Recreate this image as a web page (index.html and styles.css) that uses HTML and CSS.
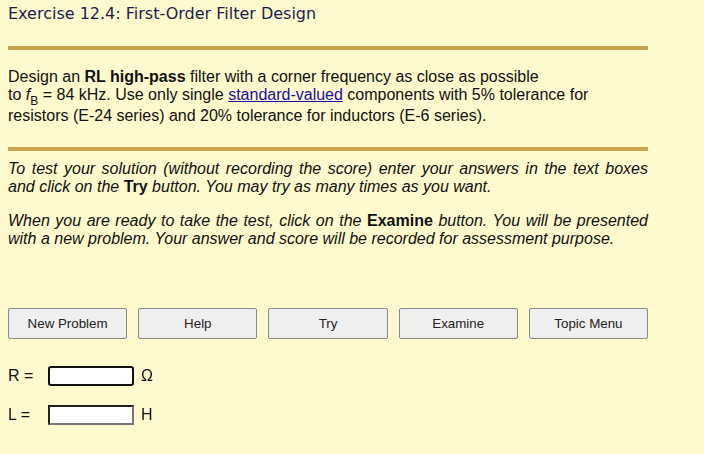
FILE: index.html
```html
<!DOCTYPE html>
<html>
<head>
<meta charset="utf-8">
<link rel="stylesheet" href="styles.css">
</head>
<body>
<div class="page">
  <h1 class="title">Exercise 12.4: First-Order Filter Design</h1>
  <hr class="rule rule-top">
  <p class="problem">Design an <b>RL high-pass</b> filter with a corner frequency as close as possible<br>to <i>f</i><sub>B</sub> = 84 kHz. Use only single <a href="#" class="link">standard-valued</a> components with 5% tolerance for<br>resistors (E-24 series) and 20% tolerance for inductors (E-6 series).</p>
  <hr class="rule rule-mid">
  <p class="info">To test your solution (without recording the score) enter your answers in the text boxes and click on the <b>Try</b> button. You may try as many times as you want.</p>
  <p class="info">When you are ready to take the test, click on the <b>Examine</b> button. You will be presented with a new problem. Your answer and score will be recorded for assessment purpose.</p>
  <div class="buttons">
    <button class="btn">New Problem</button>
    <button class="btn">Help</button>
    <button class="btn">Try</button>
    <button class="btn">Examine</button>
    <button class="btn">Topic Menu</button>
  </div>
  <div class="answers">
    <div class="row"><span class="lbl">R =</span><input class="field focused" type="text" autofocus><span class="unit">Ω</span></div>
    <div class="row"><span class="lbl">L =</span><input class="field" type="text"><span class="unit">H</span></div>
  </div>
</div>
</body>
</html>
```
FILE: styles.css
```css
html, body {
  margin: 0;
  padding: 0;
  background: #fffacd;
}
.page {
  width: 640px;
  padding: 0 8px;
  font-family: "Liberation Sans", Arial, sans-serif;
  font-size: 16px;
  color: #111;
}
.title {
  margin: 0;
  padding-top: 4px;
  font-family: "DejaVu Sans", Verdana, sans-serif;
  font-size: 16px;
  font-weight: normal;
  color: #1c1c50;
  line-height: 20px;
}
.rule {
  border: 0;
  height: 4px;
  background: #c9a24c;
  margin: 0;
}
.rule-top { margin-top: 22px; }
.problem {
  margin: 18px 0 0;
  line-height: 18px;
}
.problem sub {
  font-size: 12px;
  line-height: 12px;
  vertical-align: -5px;
}
.link { color: #1a0dab; }
.rule-mid { margin-top: 22px; }
.info {
  margin: 9px 0 0;
  font-style: italic;
  text-align: justify;
  line-height: 18px;
}
.info b { font-style: normal; }
.info + .info { margin-top: 16px; }
.buttons {
  display: flex;
  gap: 11px;
  margin-top: 60px;
}
.btn {
  flex: 1;
  height: 31px;
  background: #efefef;
  border: 1px solid #8a8a8a;
  border-radius: 2px;
  font-family: "Liberation Sans", Arial, sans-serif;
  font-size: 13.333px;
  color: #222;
}
.answers {
  margin-top: 27px;
}
.row {
  display: flex;
  align-items: center;
  height: 20px;
  margin-bottom: 19px;
}
.lbl {
  width: 40px;
  font-size: 16px;
}
.field {
  width: 78px;
  height: 16px;
  padding: 0 2px;
  margin: 0;
  background: #fff;
  border: 2px inset #767676;
  outline: none;
}
.field.focused {
  border: 2px solid #111;
  border-radius: 3px;
}
.unit {
  margin-left: 7px;
  font-size: 16px;
}
```
